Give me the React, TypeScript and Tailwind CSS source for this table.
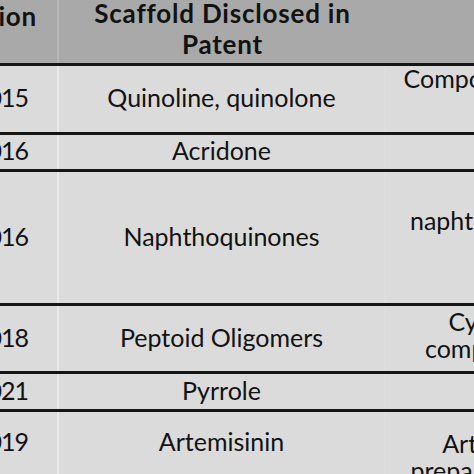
import React from "react";

type Row = {
  h: string;
  year: string;
  scaffold: string;
  desc: string[];
  descPad: string;
};

const rows: Row[] = [
  {
    h: "h-[66px]",
    year: "2015",
    scaffold: "Quinoline, quinolone",
    desc: ["Compounds and methods for", "malaria"],
    descPad: "pb-[14px]",
  },
  {
    h: "h-[34px]",
    year: "2016",
    scaffold: "Acridone",
    desc: ["Acridones"],
    descPad: "",
  },
  {
    h: "h-[131px]",
    year: "2016",
    scaffold: "Naphthoquinones",
    desc: ["Novel", "naphthoquinone derivatives", "and their", "use"],
    descPad: "pb-[8px]",
  },
  {
    h: "h-[65px]",
    year: "2018",
    scaffold: "Peptoid Oligomers",
    desc: ["Cyclic peptoid-based", "compounds and methods"],
    descPad: "pb-[8px]",
  },
  {
    h: "h-[35px]",
    year: "2021",
    scaffold: "Pyrrole",
    desc: ["Pyrroles"],
    descPad: "",
  },
  {
    h: "h-[62px]",
    year: "2019",
    scaffold: "Artemisinin",
    desc: ["Artemisinin analogues", "preparation method thereof"],
    descPad: "pt-[28px]",
  },
];

export default function App() {
  return (
    <div
      className="w-[474px] h-[474px] overflow-hidden bg-[#dbdbdb] text-[#121212]"
      style={{ fontFamily: "Lato, 'Open Sans', sans-serif" }}
    >
      <div className="w-[740px]">
        {/* header */}
        <div className="flex h-[66px] bg-[#a9a9a9] border-b-[3px] border-[#151515] font-bold text-[26px] leading-[31px] tracking-[0.8px]">
          <div className="w-[59px] shrink-0 flex justify-end pr-[20px] pt-[1px] border-r-2 border-[#b8b8b8]">
            <span className="whitespace-nowrap shrink-0">Publication</span>
          </div>
          <div className="w-[327px] shrink-0 flex flex-col items-center justify-center pb-[6px]">
            <span className="whitespace-nowrap">Scaffold Disclosed in</span>
            <span className="whitespace-nowrap">Patent</span>
          </div>
          <div className="flex-1 flex flex-col items-center justify-center">
            <span className="whitespace-nowrap">Description</span>
          </div>
        </div>
        {rows.map((r, i) => (
          <div
            key={i}
            className={`flex ${r.h} ${i < rows.length - 1 ? "border-b-[3px] border-[#151515]" : ""} box-content text-[25px]`}
          >
            <div className="w-[59px] shrink-0 flex items-center justify-end pr-[29px] pb-[2px] border-r-2 border-[#e8e8e8]">
              <span className="whitespace-nowrap shrink-0 tracking-[-1px]">{r.year}</span>
            </div>
            <div className="w-[327px] shrink-0 flex items-center justify-center pb-[2px] border-r-2 border-[#dedede]">
              <span className="whitespace-nowrap">{r.scaffold}</span>
            </div>
            <div className={`flex-1 flex flex-col items-center justify-center leading-[27px] ${r.descPad}`}>
              {r.desc.map((d, j) => (
                <span key={j} className="whitespace-nowrap">
                  {d}
                </span>
              ))}
            </div>
          </div>
        ))}
      </div>
    </div>
  );
}
